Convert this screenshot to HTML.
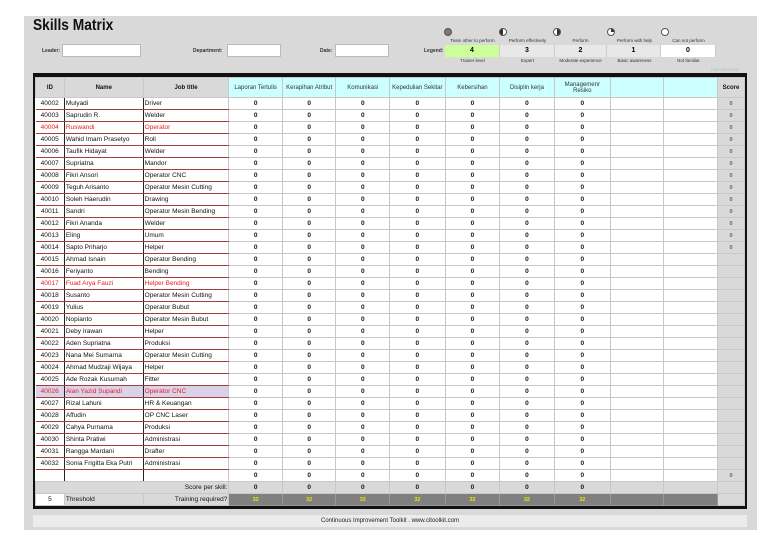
<!DOCTYPE html>
<html><head><meta charset="utf-8"><style>
*{margin:0;padding:0;box-sizing:border-box}
body{width:768px;height:543px;background:#fff;font-family:"Liberation Sans","DejaVu Sans",sans-serif;position:relative;overflow:hidden}
#panel{position:absolute;left:24px;top:16px;width:733px;height:514px;background:#d9d9d9}
h1{position:absolute;left:33px;top:17px;font-size:16px;font-weight:bold;color:#111;transform:scaleX(0.86);transform-origin:left top}
.lbl{position:absolute;font-size:5px;color:#333;font-weight:bold}
.inp{position:absolute;background:#fff;border:1px solid #bbb;height:13px}
.leg{position:absolute;top:45px;height:12px;font-size:7px;font-weight:bold;text-align:center;line-height:12px;background:#e8e8e8;border-right:1px solid #ccc}
.lt{position:absolute;font-size:4.5px;color:#333;text-align:center;width:55px}
.circ{position:absolute;top:28px;width:8px;height:8px;border-radius:50%;border:1px solid #555;background:#fff}
#tbl{position:absolute;left:33px;top:73px;width:714px;height:436px;border:2px solid #111;border-top:4px solid #111;border-bottom:3px solid #111;background:#fff}
table{border-collapse:collapse;table-layout:fixed;position:absolute;left:0;top:0}
td{height:12px;font-size:6.5px;padding:0 1px;white-space:nowrap;overflow:hidden;border:1px solid #c8c8c8;text-align:center;font-weight:bold;color:#111;line-height:10px}
tr.h td{height:20px;background:#ccffff;font-weight:normal;color:#333;font-size:6px;line-height:6px;white-space:normal}
tr.h td.g{background:#d9d9d9;font-weight:bold;color:#111}
td.i{text-align:center;font-weight:normal;border:none;border-bottom:1px solid #a0403a;border-right:1px solid #222}
td.n{text-align:left;font-weight:normal;border:none;border-bottom:1px solid #a0403a;border-right:1px solid #222}
td.j{text-align:left;font-weight:normal;border:none;border-bottom:1px solid #a0403a}
td.s{background:#d9d9d9;color:#666;font-size:5.5px}
tr.r td.i,tr.r td.n,tr.r td.j{color:#e82020}
tr.p td.i,tr.p td.n,tr.p td.j{background:#d9d2e9}
tr.sp td{background:#d9d9d9}
tr.tr td{background:#d9d9d9}
tr.tr td.y{background:#808080;color:#e8e800;font-size:5.5px;border-color:#999}
#foot{position:absolute;left:33px;top:515px;width:714px;height:12px;background:#ececec;font-size:6px;text-align:center;line-height:12px;color:#222}
</style></head><body>
<div id="panel"></div>
<h1>Skills Matrix</h1>
<div class="lbl" style="left:42px;top:48px">Leader:</div><div class="inp" style="left:62px;top:44px;width:79px"></div>
<div class="lbl" style="left:193px;top:48px">Department:</div><div class="inp" style="left:227px;top:44px;width:54px"></div>
<div class="lbl" style="left:320px;top:48px">Date:</div><div class="inp" style="left:335px;top:44px;width:54px"></div>
<div class="lbl" style="left:424px;top:48px">Legend:</div>
<div class="circ" style="left:444px;background:#777"></div>
<div class="circ" style="left:499px;background:linear-gradient(90deg,#333 50%,#fff 50%)"></div>
<div class="circ" style="left:553px;background:linear-gradient(90deg,#fff 50%,#333 50%)"></div>
<div class="circ" style="left:607px;background:conic-gradient(#333 0 25%,#fff 25%)"></div>
<div class="circ" style="left:661px"></div>
<div class="lt" style="left:445px;top:38px">Team other to perform</div>
<div class="lt" style="left:500px;top:38px">Perform effectively</div>
<div class="lt" style="left:553px;top:38px">Perform</div>
<div class="lt" style="left:607px;top:38px">Perform with help</div>
<div class="lt" style="left:661px;top:38px">Can not perform</div>
<div class="leg" style="left:445px;width:55px;background:#ccff99">4</div>
<div class="leg" style="left:500px;width:55px">3</div>
<div class="leg" style="left:555px;width:52px">2</div>
<div class="leg" style="left:607px;width:54px">1</div>
<div class="leg" style="left:661px;width:55px;background:#fff">0</div>
<div class="lt" style="left:445px;top:58px">Trainer level</div>
<div class="lt" style="left:500px;top:58px">Expert</div>
<div class="lt" style="left:553px;top:58px">Moderate experience</div>
<div class="lt" style="left:607px;top:58px">Basic awareness</div>
<div class="lt" style="left:661px;top:58px">Not familiar</div>
<div class="lt" style="left:697px;top:67px;color:#bbb">For individual</div>
<div id="tbl"><table>
<colgroup><col style="width:29px"><col style="width:79px"><col style="width:86px"><col style="width:54px"><col style="width:54px"><col style="width:54px"><col style="width:56px"><col style="width:55px"><col style="width:55px"><col style="width:52px"><col style="width:54px"><col style="width:55px"><col style="width:27px"></colgroup>
<tr class="h"><td class="g">ID</td><td class="g">Name</td><td class="g">Job title</td><td>Laporan Tertulis</td><td>Kerapihan Atribut</td><td>Komunikasi</td><td>Kepedulian Sekitar</td><td>Kebersihan</td><td>Disiplin kerja</td><td style="padding:0 10px">Managemenr Resiko</td><td></td><td></td><td class="g">Score</td></tr>
<tr><td class="i">40002</td><td class="n">Mulyadi</td><td class="j">Driver</td><td>0</td><td>0</td><td>0</td><td>0</td><td>0</td><td>0</td><td>0</td><td></td><td></td><td class="s">0</td></tr>
<tr><td class="i">40003</td><td class="n">Saprudin R.</td><td class="j">Welder</td><td>0</td><td>0</td><td>0</td><td>0</td><td>0</td><td>0</td><td>0</td><td></td><td></td><td class="s">0</td></tr>
<tr class="r"><td class="i">40004</td><td class="n">Ruswandi</td><td class="j">Operator</td><td>0</td><td>0</td><td>0</td><td>0</td><td>0</td><td>0</td><td>0</td><td></td><td></td><td class="s">0</td></tr>
<tr><td class="i">40005</td><td class="n">Wahid Imam Prasetyo</td><td class="j">Roll</td><td>0</td><td>0</td><td>0</td><td>0</td><td>0</td><td>0</td><td>0</td><td></td><td></td><td class="s">0</td></tr>
<tr><td class="i">40006</td><td class="n">Taufik Hidayat</td><td class="j">Welder</td><td>0</td><td>0</td><td>0</td><td>0</td><td>0</td><td>0</td><td>0</td><td></td><td></td><td class="s">0</td></tr>
<tr><td class="i">40007</td><td class="n">Supriatna</td><td class="j">Mandor</td><td>0</td><td>0</td><td>0</td><td>0</td><td>0</td><td>0</td><td>0</td><td></td><td></td><td class="s">0</td></tr>
<tr><td class="i">40008</td><td class="n">Fikri Ansori</td><td class="j">Operator CNC</td><td>0</td><td>0</td><td>0</td><td>0</td><td>0</td><td>0</td><td>0</td><td></td><td></td><td class="s">0</td></tr>
<tr><td class="i">40009</td><td class="n">Teguh Arisanto</td><td class="j">Operator Mesin Cutting</td><td>0</td><td>0</td><td>0</td><td>0</td><td>0</td><td>0</td><td>0</td><td></td><td></td><td class="s">0</td></tr>
<tr><td class="i">40010</td><td class="n">Soleh Haerudin</td><td class="j">Drawing</td><td>0</td><td>0</td><td>0</td><td>0</td><td>0</td><td>0</td><td>0</td><td></td><td></td><td class="s">0</td></tr>
<tr><td class="i">40011</td><td class="n">Sandri</td><td class="j">Operator Mesin Bending</td><td>0</td><td>0</td><td>0</td><td>0</td><td>0</td><td>0</td><td>0</td><td></td><td></td><td class="s">0</td></tr>
<tr><td class="i">40012</td><td class="n">Fikri Ananda</td><td class="j">Welder</td><td>0</td><td>0</td><td>0</td><td>0</td><td>0</td><td>0</td><td>0</td><td></td><td></td><td class="s">0</td></tr>
<tr><td class="i">40013</td><td class="n">Eling</td><td class="j">Umum</td><td>0</td><td>0</td><td>0</td><td>0</td><td>0</td><td>0</td><td>0</td><td></td><td></td><td class="s">0</td></tr>
<tr><td class="i">40014</td><td class="n">Sapto Priharjo</td><td class="j">Helper</td><td>0</td><td>0</td><td>0</td><td>0</td><td>0</td><td>0</td><td>0</td><td></td><td></td><td class="s">0</td></tr>
<tr><td class="i">40015</td><td class="n">Ahmad Isnain</td><td class="j">Operator Bending</td><td>0</td><td>0</td><td>0</td><td>0</td><td>0</td><td>0</td><td>0</td><td></td><td></td><td class="s"></td></tr>
<tr><td class="i">40016</td><td class="n">Feriyanto</td><td class="j">Bending</td><td>0</td><td>0</td><td>0</td><td>0</td><td>0</td><td>0</td><td>0</td><td></td><td></td><td class="s"></td></tr>
<tr class="r"><td class="i">40017</td><td class="n">Fuad Arya Fauzi</td><td class="j">Helper Bending</td><td>0</td><td>0</td><td>0</td><td>0</td><td>0</td><td>0</td><td>0</td><td></td><td></td><td class="s"></td></tr>
<tr><td class="i">40018</td><td class="n">Susanto</td><td class="j">Operator Mesin Cutting</td><td>0</td><td>0</td><td>0</td><td>0</td><td>0</td><td>0</td><td>0</td><td></td><td></td><td class="s"></td></tr>
<tr><td class="i">40019</td><td class="n">Yulius</td><td class="j">Operator Bubut</td><td>0</td><td>0</td><td>0</td><td>0</td><td>0</td><td>0</td><td>0</td><td></td><td></td><td class="s"></td></tr>
<tr><td class="i">40020</td><td class="n">Nopianto</td><td class="j">Operator Mesin Bubut</td><td>0</td><td>0</td><td>0</td><td>0</td><td>0</td><td>0</td><td>0</td><td></td><td></td><td class="s"></td></tr>
<tr><td class="i">40021</td><td class="n">Deby Irawan</td><td class="j">Helper</td><td>0</td><td>0</td><td>0</td><td>0</td><td>0</td><td>0</td><td>0</td><td></td><td></td><td class="s"></td></tr>
<tr><td class="i">40022</td><td class="n">Aden Supriatna</td><td class="j">Produksi</td><td>0</td><td>0</td><td>0</td><td>0</td><td>0</td><td>0</td><td>0</td><td></td><td></td><td class="s"></td></tr>
<tr><td class="i">40023</td><td class="n">Nana Mei Sumarna</td><td class="j">Operator Mesin Cutting</td><td>0</td><td>0</td><td>0</td><td>0</td><td>0</td><td>0</td><td>0</td><td></td><td></td><td class="s"></td></tr>
<tr><td class="i">40024</td><td class="n">Ahmad Mudzaji Wijaya</td><td class="j">Helper</td><td>0</td><td>0</td><td>0</td><td>0</td><td>0</td><td>0</td><td>0</td><td></td><td></td><td class="s"></td></tr>
<tr><td class="i">40025</td><td class="n">Ade Rozak Kusumah</td><td class="j">Fitter</td><td>0</td><td>0</td><td>0</td><td>0</td><td>0</td><td>0</td><td>0</td><td></td><td></td><td class="s"></td></tr>
<tr class="r p"><td class="i">40026</td><td class="n">Alan Yazid Supandi</td><td class="j">Operator CNC</td><td>0</td><td>0</td><td>0</td><td>0</td><td>0</td><td>0</td><td>0</td><td></td><td></td><td class="s"></td></tr>
<tr><td class="i">40027</td><td class="n">Rizal Lahuni</td><td class="j">HR &amp; Keuangan</td><td>0</td><td>0</td><td>0</td><td>0</td><td>0</td><td>0</td><td>0</td><td></td><td></td><td class="s"></td></tr>
<tr><td class="i">40028</td><td class="n">Affudin</td><td class="j">OP CNC Laser</td><td>0</td><td>0</td><td>0</td><td>0</td><td>0</td><td>0</td><td>0</td><td></td><td></td><td class="s"></td></tr>
<tr><td class="i">40029</td><td class="n">Cahya Purnama</td><td class="j">Produksi</td><td>0</td><td>0</td><td>0</td><td>0</td><td>0</td><td>0</td><td>0</td><td></td><td></td><td class="s"></td></tr>
<tr><td class="i">40030</td><td class="n">Shinta Pratiwi</td><td class="j">Administrasi</td><td>0</td><td>0</td><td>0</td><td>0</td><td>0</td><td>0</td><td>0</td><td></td><td></td><td class="s"></td></tr>
<tr><td class="i">40031</td><td class="n">Rangga Mardani</td><td class="j">Drafter</td><td>0</td><td>0</td><td>0</td><td>0</td><td>0</td><td>0</td><td>0</td><td></td><td></td><td class="s"></td></tr>
<tr><td class="i">40032</td><td class="n">Sonia Frigitta Eka Putri</td><td class="j">Administrasi</td><td>0</td><td>0</td><td>0</td><td>0</td><td>0</td><td>0</td><td>0</td><td></td><td></td><td class="s"></td></tr>
<tr><td class="i" style="border-bottom:1px solid #c8c8c8"></td><td class="n" style="border-bottom:1px solid #c8c8c8"></td><td class="j" style="border-bottom:1px solid #c8c8c8"></td><td>0</td><td>0</td><td>0</td><td>0</td><td>0</td><td>0</td><td>0</td><td></td><td></td><td class="s">0</td></tr>
<tr class="sp"><td colspan="3" style="text-align:right;font-weight:normal">Score per skill:</td><td>0</td><td>0</td><td>0</td><td>0</td><td>0</td><td>0</td><td>0</td><td></td><td></td><td></td></tr>
<tr class="tr"><td style="background:#fff;font-weight:normal">5</td><td style="text-align:left;font-weight:normal">Threshold</td><td style="text-align:right;font-weight:normal">Training required?</td><td class="y">32</td><td class="y">32</td><td class="y">32</td><td class="y">32</td><td class="y">32</td><td class="y">32</td><td class="y">32</td><td class="y"></td><td class="y"></td><td></td></tr>
</table></div>
<div id="foot">Continuous Improvement Toolkit . www.citoolkit.com</div>
</body></html>
